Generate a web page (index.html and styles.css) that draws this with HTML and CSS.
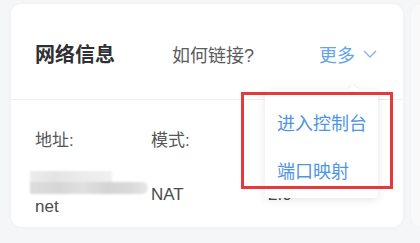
FILE: index.html
```html
<!DOCTYPE html>
<html lang="zh-CN">
<head>
<meta charset="utf-8">
<title>网络信息</title>
<link rel="stylesheet" href="styles.css">
</head>
<body>
<div class="page">
  <section class="card">
    <header class="card-head">
      <h2 class="title">网络信息</h2>
      <span class="help">如何链接?</span>
      <span class="more">更多<svg class="chev" width="14" height="8" viewBox="0 0 14 8"><path d="M1 1 L7 7 L13 1" fill="none" stroke="currentColor" stroke-width="1.3"/></svg></span>
    </header>
    <div class="card-body">
      <div class="label">地址:</div>
      <div class="label">模式:</div>
      <div class="label"></div>
      <div class="value"><div class="mosaic"><span class="m1"></span><span class="m2"></span></div>net</div>
      <div class="value centered">NAT</div>
      <div class="value centered">2.0</div>
    </div>
  </section>
  <section class="card card-next"></section>

  <div class="dropdown">
    <span class="arrow"></span>
    <div class="item">进入控制台</div>
    <div class="item">端口映射</div>
  </div>
  <div class="highlight"></div>
</div>
</body>
</html>
```

FILE: styles.css
```css
html, body {
  margin: 0;
  padding: 0;
  background: #f5f6f7;
  font-family: "Liberation Sans", "Noto Sans CJK SC", sans-serif;
}

.page {
  position: relative;
  width: 420px;
  height: 243px;
  overflow: hidden;
  display: flex;
  gap: 8px;
  padding: 4px 0 0 11px;
  box-sizing: border-box;
}

.card {
  flex: 0 0 392px;
  height: 223px;
  background: #fff;
  border-radius: 10px;
  box-shadow: 0 0 4px rgba(0, 0, 0, 0.04);
  overflow: hidden;
}

.card-next {
  flex: 0 0 200px;
  background: #f9f9fa;
  box-shadow: 0 0 3px rgba(0, 0, 0, 0.03);
}

.card-head {
  box-sizing: border-box;
  height: 96px;
  padding: 4px 26px 0 24px;
  border-bottom: 1px solid #eeeff1;
  display: flex;
  align-items: center;
}

.title {
  margin: 0;
  font-size: 20px;
  font-weight: bold;
  color: #2f3033;
  font-family: "Noto Sans CJK SC", sans-serif;
}

.help {
  margin-left: 57px;
  font-size: 18px;
  color: #5a5c60;
}

.more {
  margin-left: auto;
  font-size: 18px;
  color: #64a4ea;
  display: flex;
  align-items: center;
}

.chev {
  margin-left: 8px;
  color: #7fb3ee;
}

.card-body {
  display: grid;
  grid-template-columns: 116px 117px 1fr;
  grid-template-rows: 24px 48px;
  row-gap: 18px;
  padding: 29px 24px 0 24px;
  font-size: 17px;
  line-height: 24px;
  color: #555658;
}

.value {
  color: #4a4b4d;
}

.centered {
  align-self: center;
}

.mosaic {
  position: relative;
  height: 24px;
  margin-left: -5px;
  filter: blur(1.2px);
}

.m1 {
  position: absolute;
  left: 0;
  top: 0;
  width: 82px;
  height: 12px;
  background: linear-gradient(90deg, #ececec 0, #e4e4e4 30%, #ebebeb 60%, #f0f0f0 100%);
}

.m2 {
  position: absolute;
  left: 0;
  top: 11px;
  width: 118px;
  height: 12px;
  background: linear-gradient(90deg, #dcdcdc 0, #d6d6d6 25%, #e0e0e0 45%, #d4d4d4 65%, #dadada 85%, #e6e6e6 100%);
  border-radius: 0 6px 6px 0;
}

.dropdown {
  position: absolute;
  left: 265px;
  top: 90px;
  width: 113px;
  height: 108px;
  box-sizing: border-box;
  padding: 8px 0 4px;
  background: #fff;
  border-radius: 4px;
  box-shadow: 0 2px 10px rgba(0, 0, 0, 0.1);
}

.arrow {
  position: absolute;
  left: 84px;
  top: -4px;
  width: 8px;
  height: 8px;
  background: #fff;
  transform: rotate(45deg);
  box-shadow: -1px -1px 2px rgba(0, 0, 0, 0.05);
}

.item {
  position: relative;
  height: 48px;
  line-height: 48px;
  padding-left: 12px;
  font-size: 18px;
  color: #4e95e6;
  font-family: "Noto Sans CJK SC", sans-serif;
}

.highlight {
  position: absolute;
  left: 241px;
  top: 92px;
  width: 152px;
  height: 97px;
  box-sizing: border-box;
  border: 3px solid #e6393e;
}
```
